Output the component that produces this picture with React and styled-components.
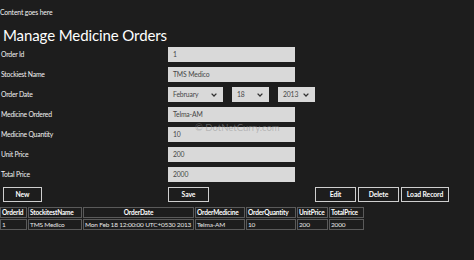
import React from "react";
import styled, { createGlobalStyle } from "styled-components";

const GlobalStyle = createGlobalStyle`
  html, body {
    margin: 0;
    padding: 0;
    background: #1d1d1d;
  }
  body {
    font-family: Lato, "Open Sans", sans-serif;
    color: #f2f2f2;
  }
`;

const Page = styled.div`
  position: relative;
  width: 474px;
  height: 260px;
  background: #1d1d1d;
  overflow: hidden;
`;

const Note = styled.div`
  font-size: 6.8px;
  line-height: 10px;
  letter-spacing: -0.15px;
  padding: 7px 0 0 0;
`;

const Title = styled.h1`
  margin: 0;
  padding: 9px 0 0 3px;
  height: 21px;
  font-size: 15px;
  font-weight: 400;
  line-height: 18px;
  letter-spacing: -0.1px;
  color: #ffffff;
`;

const Form = styled.div`
  display: grid;
  grid-template-columns: 168px 1fr;
  grid-auto-rows: 15px;
  row-gap: 5px;
`;

const Label = styled.div`
  font-size: 6.8px;
  line-height: 15px;
  letter-spacing: -0.2px;
  padding-left: 1px;
`;

const Field = styled.div`
  width: 127px;
  height: 15px;
  box-sizing: border-box;
  background: #d9d9d9;
  color: #474747;
  font-size: 6.8px;
  line-height: 15px;
  letter-spacing: -0.15px;
  padding-left: 5px;
`;

const DateRow = styled.div`
  display: flex;
  gap: 9px;
`;

const Select = styled.div`
  width: ${(p) => p.w}px;
  height: 15px;
  box-sizing: border-box;
  background: #d9d9d9;
  color: #474747;
  font-size: 6.8px;
  letter-spacing: -0.15px;
  line-height: 15px;
  padding: 0 6px 0 5px;
  display: flex;
  align-items: center;
  justify-content: space-between;
`;

const Chevron = () => (
  <svg width="6" height="4" viewBox="0 0 6 4">
    <path d="M0.6 0.6 L3 3 L5.4 0.6" fill="none" stroke="#333" strokeWidth="1.3" />
  </svg>
);

const ButtonBar = styled.div`
  display: grid;
  grid-template-columns: 168px 147px auto;
  margin-top: 5px;
  height: 15px;
`;

const ButtonGroup = styled.div`
  display: flex;
  gap: 2px;
  padding-left: ${(p) => p.pl || 0}px;
`;

const Button = styled.div`
  width: ${(p) => p.w}px;
  height: 15px;
  box-sizing: border-box;
  border: 1.5px solid #cfcfcf;
  color: #ffffff;
  font-size: 6.8px;
  font-weight: 700;
  line-height: 12px;
  letter-spacing: -0.1px;
  text-align: center;
`;

const Table = styled.table`
  margin-top: 4px;
  margin-left: -1px;
  border-collapse: separate;
  border-spacing: 1px;
  table-layout: fixed;
  width: 366px;
  font-size: 6.5px;
  letter-spacing: -0.18px;
`;

const Th = styled.th`
  border: 1px solid #5a5a5a;
  padding: 0 1px;
  height: 9px;
  line-height: 9px;
  font-weight: 700;
  color: #ffffff;
  text-align: ${(p) => (p.center ? "center" : "left")};
  white-space: nowrap;
  overflow: hidden;
  width: ${(p) => p.w}px;
  box-sizing: border-box;
`;

const Td = styled.td`
  border: 1px solid #5a5a5a;
  padding: 0 0 0 1px;
  height: 9px;
  line-height: 9px;
  color: #e8e8e8;
  white-space: nowrap;
  overflow: hidden;
`;

const Watermark = styled.div`
  position: absolute;
  left: 195px;
  top: 122px;
  font-size: 9.5px;
  color: rgba(150, 150, 150, 0.55);
  pointer-events: none;
`;

const columns = [
  { name: "OrderId", w: 27 },
  { name: "StockitestName", w: 54 },
  { name: "OrderDate", w: 111, center: true },
  { name: "OrderMedicine", w: 50 },
  { name: "OrderQuantity", w: 50 },
  { name: "UnitPrice", w: 31 },
  { name: "TotalPrice", w: 35 },
];

const row = [
  "1",
  "TMS Medico",
  "Mon Feb 18 12:00:00 UTC+0530 2013",
  "Telma-AM",
  "10",
  "200",
  "2000",
];

export default function App() {
  return (
    <Page>
      <GlobalStyle />
      <Note>Content goes here</Note>
      <Title>Manage Medicine Orders</Title>
      <Form>
        <Label>Order Id</Label>
        <Field>1</Field>
        <Label>Stockiest Name</Label>
        <Field>TMS Medico</Field>
        <Label>Order Date</Label>
        <DateRow>
          <Select w={55}>
            February <Chevron />
          </Select>
          <Select w={37}>
            18 <Chevron />
          </Select>
          <Select w={37}>
            2013 <Chevron />
          </Select>
        </DateRow>
        <Label>Medicine Ordered</Label>
        <Field>Telma-AM</Field>
        <Label>Medicine Quantity</Label>
        <Field>10</Field>
        <Label>Unit Price</Label>
        <Field>200</Field>
        <Label>Total Price</Label>
        <Field>2000</Field>
      </Form>
      <ButtonBar>
        <ButtonGroup pl={3}>
          <Button w={39}>New</Button>
        </ButtonGroup>
        <ButtonGroup>
          <Button w={41}>Save</Button>
        </ButtonGroup>
        <ButtonGroup>
          <Button w={41}>Edit</Button>
          <Button w={41}>Delete</Button>
          <Button w={48}>Load Record</Button>
        </ButtonGroup>
      </ButtonBar>
      <Table>
        <thead>
          <tr>
            {columns.map((c) => (
              <Th key={c.name} w={c.w} center={c.center}>
                {c.name}
              </Th>
            ))}
          </tr>
        </thead>
        <tbody>
          <tr>
            {row.map((v, i) => (
              <Td key={i}>{v}</Td>
            ))}
          </tr>
        </tbody>
      </Table>
      <Watermark>© DotNetCurry.com</Watermark>
    </Page>
  );
}
